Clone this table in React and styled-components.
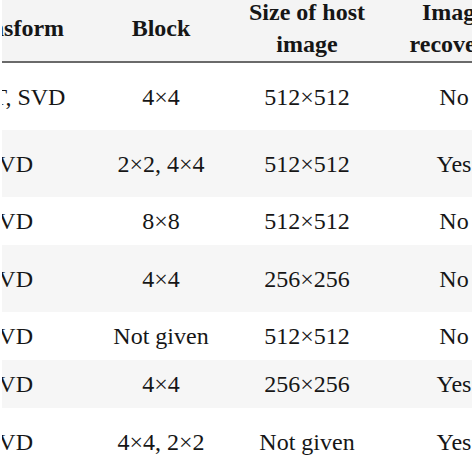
import React from "react";
import styled, { createGlobalStyle } from "styled-components";

const GlobalStyle = createGlobalStyle`
	html, body {
		margin: 0;
		padding: 0;
		background: #ffffff;
		overflow: hidden;
	}
`;

const rows = [
	{ transform: "DWT, SVD", block: "4×4", size: "512×512", recovery: "No", tall: true },
	{ transform: "SVD", block: "2×2, 4×4", size: "512×512", recovery: "Yes", tall: true, shaded: true },
	{ transform: "SVD", block: "8×8", size: "512×512", recovery: "No" },
	{ transform: "SVD", block: "4×4", size: "256×256", recovery: "No", tall: true, shaded: true },
	{ transform: "SVD", block: "Not given", size: "512×512", recovery: "No" },
	{ transform: "SVD", block: "4×4", size: "256×256", recovery: "Yes", shaded: true },
	{ transform: "SVD", block: "4×4, 2×2", size: "Not given", recovery: "Yes", tall: true },
];

const App = () => {
	return (
		<>
			<GlobalStyle />
			<Frame>
				<Table>
					<HeaderRow>
						<HeadCell>Transform</HeadCell>
						<HeadCell>Block</HeadCell>
						<HeadCell>
							Size of host
							<br />
							image
						</HeadCell>
						<HeadCell>
							Image
							<br />
							recovery
						</HeadCell>
					</HeaderRow>
					{rows.map((r, i) => (
						<Row key={i} $tall={r.tall} $shaded={r.shaded}>
							<Cell>{r.transform}</Cell>
							<Cell>{r.block}</Cell>
							<Cell>{r.size}</Cell>
							<Cell>{r.recovery}</Cell>
						</Row>
					))}
				</Table>
			</Frame>
		</>
	);
};

const Frame = styled.div`
	width: 470px;
	height: 474px;
	margin: 0 2px;
	overflow: hidden;
`;

const Table = styled.div`
	width: 598px;
	margin-left: -93px;
	margin-top: -6px;
	font-family: "Liberation Serif", "Times New Roman", serif;
	font-size: 24px;
	color: #161616;
`;

const HeaderRow = styled.div`
	display: grid;
	grid-template-columns: 200px 104px 188px 106px;
	height: 67px;
	background: #f4f4f4;
	border-bottom: 2px solid #6a6a6a;
`;

const Row = styled.div`
	display: grid;
	grid-template-columns: 200px 104px 188px 106px;
	height: ${p => (p.$tall ? "67px" : "48px")};
	background: ${p => (p.$shaded ? "#f6f6f6" : "#ffffff")};
`;

const HeadCell = styled.div`
	display: flex;
	align-items: center;
	justify-content: center;
	text-align: center;
	font-weight: bold;
	line-height: 32px;
	white-space: nowrap;
`;

const Cell = styled.div`
	display: flex;
	align-items: center;
	justify-content: center;
	white-space: nowrap;
	line-height: 28px;
`;

export default App;
